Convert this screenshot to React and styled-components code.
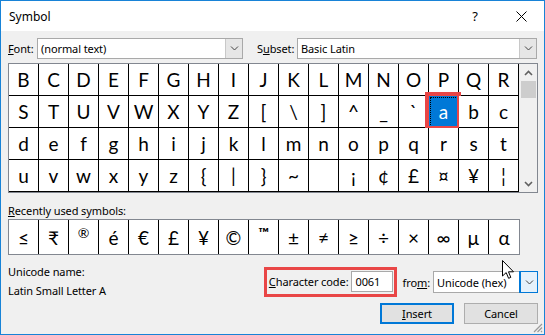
import React from "react";
import styled, { createGlobalStyle } from "styled-components";

const ui = `"Noto Sans", "Open Sans", sans-serif`;
const symFont = `Lato, "Noto Sans", "DejaVu Sans", sans-serif`;
const red = "#e94646";

const Global = createGlobalStyle`
  html, body { margin: 0; padding: 0; background: #f0f0f0; }
  * { box-sizing: border-box; }
`;

const Window = styled.div`
  position: relative;
  width: 545px;
  height: 335px;
  border: 1px solid #1883d7;
  background: #f0f0f0;
  display: flex;
  flex-direction: column;
  font-family: ${ui};
  font-size: 11px;
  letter-spacing: -0.1px;
  color: #000;
  overflow: hidden;
`;

const TitleBar = styled.div`
  height: 30px;
  flex-shrink: 0;
  background: #fff;
  display: flex;
  align-items: center;
  padding-left: 8px;
`;

const Title = styled.div`
  flex: 1;
  font-size: 12px;
  letter-spacing: 0;
`;

const TitleButton = styled.div`
  width: 46px;
  height: 30px;
  display: flex;
  align-items: center;
  justify-content: center;
  font-size: 13px;
  color: #000;
`;

const Body = styled.div`
  padding: 0 6px 0 6px;
  display: flex;
  flex-direction: column;
`;

const FontRow = styled.div`
  margin-top: 7px;
  display: grid;
  grid-template-columns: 30px 206px 14px 40px 240px;
  align-items: center;
  height: 21px;
`;

const Label = styled.span`
  white-space: nowrap;
  u { text-decoration: underline; }
`;

const Combo = styled.div`
  height: ${(p) => p.$h || 21}px;
  border: 1px solid #a9a9a9;
  background: #fff;
  display: flex;
  align-items: center;
  padding-left: 3px;
`;

const ComboText = styled.span`
  flex: 1;
  white-space: nowrap;
`;

const DropButton = styled.div`
  width: 17px;
  align-self: stretch;
  display: flex;
  align-items: center;
  justify-content: center;
  background: ${(p) => (p.$hot ? "#e5f1fb" : "#e6e6e6")};
  border-left: 1px solid ${(p) => (p.$hot ? "#0078d7" : "#c8c8c8")};
  outline: ${(p) => (p.$hot ? "1px solid #0078d7" : "none")};
`;

const CharFrame = styled.div`
  margin-top: 4px;
  margin-left: 1px;
  width: 530px;
  border: 1px solid #828790;
  display: flex;
`;

const CharGrid = styled.div`
  display: grid;
  grid-template-columns: repeat(17, 30px);
  grid-auto-rows: 32px;
  background: #fff;
`;

const Cell = styled.div`
  position: relative;
  border-right: ${(p) => (p.$last ? "none" : "1px solid #000")};
  border-bottom: ${(p) => (p.$row ? "1px solid #000" : "none")};
  display: flex;
  align-items: center;
  justify-content: center;
  font-family: ${symFont};
  font-size: 19px;
  letter-spacing: 0;
  color: ${(p) => (p.$selected ? "#fff" : "#000")};
  background: ${(p) => (p.$selected ? "#0078d7" : "#fff")};
  outline: ${(p) => (p.$selected ? "1px dotted #000" : "none")};
  outline-offset: -2px;
`;

const Sup = styled.span`
  font-size: 14px;
  font-weight: ${(p) => (p.$bold ? 700 : 400)};
  position: relative;
  top: -5px;
`;

const Callout = styled.div`
  position: absolute;
  top: -4px;
  left: -4px;
  right: -3px;
  bottom: -3px;
  border: 4px solid ${red};
  pointer-events: none;
`;

const ScrollBar = styled.div`
  width: 18px;
  background: #f0f0f0;
  display: flex;
  flex-direction: column;
  align-items: center;
`;

const ScrollArrow = styled.div`
  height: 17px;
  width: 100%;
  display: flex;
  align-items: center;
  justify-content: center;
`;

const Thumb = styled.div`
  width: 15px;
  height: 17px;
  background: #cdcdcd;
`;

const Spacer = styled.div`
  flex: 1;
`;

const SectionLabel = styled.div`
  margin-top: 9px;
  margin-left: 1px;
  height: 17px;
  line-height: 17px;
`;

const RecentBox = styled.div`
  margin-left: 1px;
  width: 512px;
  height: 36px;
  border: 1px solid #828790;
  background: #fff;
  display: grid;
  grid-template-columns: repeat(17, 30px);
`;

const Bottom = styled.div`
  margin-top: 9px;
  display: flex;
  justify-content: space-between;
`;

const InfoBlock = styled.div`
  margin-left: 1px;
  display: flex;
  flex-direction: column;
  gap: 3px;
  line-height: 16px;
`;

const Controls = styled.div`
  padding-top: 3px;
  display: flex;
  flex-direction: column;
  align-items: flex-end;
  gap: 6px;
`;

const CodeRow = styled.div`
  display: flex;
  align-items: center;
`;

const CalloutBox = styled.div`
  border: 3px solid ${red};
  padding: 1px 1px 2px 2px;
  display: flex;
  align-items: center;
  gap: 3px;
`;

const CodeInput = styled.div`
  width: 42px;
  height: 21px;
  border: 1px solid #a9a9a9;
  background: #fff;
  padding-left: 3px;
  display: flex;
  align-items: center;
`;

const FromLabel = styled(Label)`
  margin: 0 3px 0 5px;
`;

const ButtonRow = styled.div`
  display: flex;
  gap: 10px;
`;

const Button = styled.div`
  width: 74px;
  height: 21px;
  background: #e1e1e1;
  border: ${(p) => (p.$default ? "2px solid #0078d7" : "1px solid #adadad")};
  display: flex;
  align-items: center;
  justify-content: center;
  u { text-decoration: underline; }
`;

const Cursor = styled.svg`
  position: absolute;
  left: 501px;
  top: 259px;
`;

const Grip = styled.svg`
  position: absolute;
  right: 1px;
  bottom: 1px;
`;

const rows = [
  ["B", "C", "D", "E", "F", "G", "H", "I", "J", "K", "L", "M", "N", "O", "P", "Q", "R"],
  ["S", "T", "U", "V", "W", "X", "Y", "Z", "[", "\\", "]", "^", "_", "`", "a", "b", "c"],
  ["d", "e", "f", "g", "h", "i", "j", "k", "l", "m", "n", "o", "p", "q", "r", "s", "t"],
  ["u", "v", "w", "x", "y", "z", "{", "|", "}", "~", "", "¡", "¢", "£", "¤", "¥", "¦"],
];

const recent = ["≤", "₹", "®", "é", "€", "£", "¥", "©", "™", "±", "≠", "≥", "÷", "×", "∞", "µ", "α"];

function Chevron({ up, color = "#606060" }) {
  return (
    <svg width="9" height="6" viewBox="0 0 9 6">
      <path
        d={up ? "M1 5 L4.5 1.5 L8 5" : "M1 1 L4.5 4.5 L8 1"}
        fill="none"
        stroke={color}
        strokeWidth="1.6"
      />
    </svg>
  );
}

function SmallChevron() {
  return (
    <svg width="9" height="5" viewBox="0 0 9 5">
      <path d="M1 0.5 L4.5 4 L8 0.5" fill="none" stroke="#444" strokeWidth="1" />
    </svg>
  );
}

function RecentGlyph({ ch }) {
  if (ch === "®") return <Sup>{ch}</Sup>;
  if (ch === "™") return <Sup $bold>{ch}</Sup>;
  return ch;
}

export default function App() {
  return (
    <>
      <Global />
      <Window>
        <TitleBar>
          <Title>Symbol</Title>
          <TitleButton>?</TitleButton>
          <TitleButton>
            <svg width="11" height="11" viewBox="0 0 11 11">
              <path d="M0.5 0.5 L10.5 10.5 M10.5 0.5 L0.5 10.5" stroke="#000" strokeWidth="1" />
            </svg>
          </TitleButton>
        </TitleBar>
        <Body>
          <FontRow>
            <Label style={{ marginLeft: 1 }}>
              <u>F</u>ont:
            </Label>
            <Combo>
              <ComboText>(normal text)</ComboText>
              <DropButton>
                <SmallChevron />
              </DropButton>
            </Combo>
            <span />
            <Label>
              S<u>u</u>bset:
            </Label>
            <Combo>
              <ComboText>Basic Latin</ComboText>
              <DropButton>
                <SmallChevron />
              </DropButton>
            </Combo>
          </FontRow>

          <CharFrame>
            <CharGrid>
              {rows.map((row, r) =>
                row.map((ch, c) => {
                  const selected = r === 1 && c === 14;
                  return (
                    <Cell key={`${r}-${c}`} $row={true} $selected={selected}>
                      {ch}
                      {selected && <Callout />}
                    </Cell>
                  );
                })
              )}
            </CharGrid>
            <ScrollBar>
              <ScrollArrow>
                <Chevron up />
              </ScrollArrow>
              <Thumb />
              <Spacer />
              <ScrollArrow>
                <Chevron />
              </ScrollArrow>
            </ScrollBar>
          </CharFrame>

          <SectionLabel>
            <Label>
              <u>R</u>ecently used symbols:
            </Label>
          </SectionLabel>
          <RecentBox>
            {recent.map((ch, i) => (
              <Cell key={i} $last={i === recent.length - 1}>
                <RecentGlyph ch={ch} />
              </Cell>
            ))}
          </RecentBox>

          <Bottom>
            <InfoBlock>
              <span>Unicode name:</span>
              <span>Latin Small Letter A</span>
            </InfoBlock>
            <Controls>
              <CodeRow>
                <CalloutBox>
                  <Label>
                    <u>C</u>haracter code:
                  </Label>
                  <CodeInput>0061</CodeInput>
                </CalloutBox>
                <FromLabel>
                  fro<u>m</u>:
                </FromLabel>
                <Combo $h={22} style={{ width: 105 }}>
                  <ComboText>Unicode (hex)</ComboText>
                  <DropButton $hot>
                    <SmallChevron />
                  </DropButton>
                </Combo>
              </CodeRow>
              <ButtonRow>
                <Button $default>
                  <span>
                    <u>I</u>nsert
                  </span>
                </Button>
                <Button>Cancel</Button>
              </ButtonRow>
            </Controls>
          </Bottom>
        </Body>

        <Cursor width="13" height="20" viewBox="0 0 13 20">
          <path
            d="M0.5 0.5 L0.5 16 L4.2 12.6 L6.6 18.3 L8.8 17.4 L6.5 11.8 L11.5 11.8 Z"
            fill="#fff"
            stroke="#000"
            strokeWidth="1"
          />
        </Cursor>
        <Grip width="10" height="10" viewBox="0 0 10 10">
          <path d="M9 1 L1 9 M9 4.5 L4.5 9 M9 8 L8 9" stroke="#9a9a9a" strokeWidth="1.2" />
        </Grip>
      </Window>
    </>
  );
}
